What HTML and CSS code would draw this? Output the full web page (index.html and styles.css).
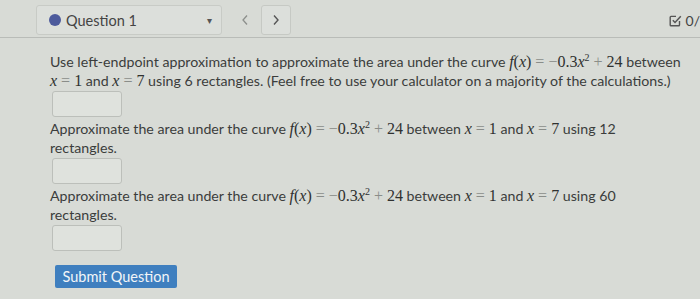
FILE: index.html
```html
<!DOCTYPE html>
<html>
<head>
<meta charset="utf-8">
<link rel="stylesheet" href="styles.css">
</head>
<body>
<div class="header">
  <div class="qselect">
    <span class="dot"></span>
    <span class="qlabel">Question 1</span>
    <span class="caret">&#9662;</span>
  </div>
  <div class="navbtn prev"><svg width="8" height="12" viewBox="0 0 8 12"><path d="M6 1.5 L2 6 L6 10.5" fill="none" stroke="#8c8f8b" stroke-width="1.3"/></svg></div>
  <div class="navbtn next"><svg width="8" height="12" viewBox="0 0 8 12"><path d="M2 1.5 L6 6 L2 10.5" fill="none" stroke="#555" stroke-width="1.4"/></svg></div>
  <div class="score">
    <svg class="chk" width="13" height="13" viewBox="0 0 13 13"><path d="M10.5 7 V11 Q10.5 11.8 9.7 11.8 H2 Q1.2 11.8 1.2 11 V3.2 Q1.2 2.4 2 2.4 H7" fill="none" stroke="#555" stroke-width="1.4"/><path d="M3.8 6.3 L6 8.5 L11.8 2.2" fill="none" stroke="#555" stroke-width="1.5"/></svg>
    <span>0/</span>
  </div>
</div>
<div class="content">
  <p class="q">Use left-endpoint approximation to approximate the area under the curve <span class="m"><i>f</i>(<i>x</i>) <span class="op">=</span> <span class="op">−</span>0.3<i>x</i><sup>2</sup> <span class="op">+</span> 24</span> between <span class="m"><i>x</i> <span class="op">=</span> 1</span> and <span class="m"><i>x</i> <span class="op">=</span> 7</span> using 6 rectangles. (Feel free to use your calculator on a majority of the calculations.)</p>
  <div class="answer"></div>
  <p class="q">Approximate the area under the curve <span class="m"><i>f</i>(<i>x</i>) <span class="op">=</span> <span class="op">−</span>0.3<i>x</i><sup>2</sup> <span class="op">+</span> 24</span> between <span class="m"><i>x</i> <span class="op">=</span> 1</span> and <span class="m"><i>x</i> <span class="op">=</span> 7</span> using 12 rectangles.</p>
  <div class="answer"></div>
  <p class="q">Approximate the area under the curve <span class="m"><i>f</i>(<i>x</i>) <span class="op">=</span> <span class="op">−</span>0.3<i>x</i><sup>2</sup> <span class="op">+</span> 24</span> between <span class="m"><i>x</i> <span class="op">=</span> 1</span> and <span class="m"><i>x</i> <span class="op">=</span> 7</span> using 60 rectangles.</p>
  <div class="answer"></div>
  <button class="submit">Submit Question</button>
</div>
</body>
</html>
```
FILE: styles.css
```css
html, body {
  margin: 0;
  padding: 0;
}
body {
  background: #d8dbd6;
  font-family: Lato, "Open Sans", sans-serif;
  color: #3b3d3c;
  width: 700px;
  height: 299px;
  overflow: hidden;
}
.header {
  height: 38px;
  border-bottom: 1px solid #b9bcb8;
  display: flex;
  align-items: flex-start;
  padding-top: 5px;
  box-sizing: border-box;
}
.qselect {
  margin-left: 36px;
  width: 186px;
  height: 30px;
  box-sizing: border-box;
  border: 1px solid #c8cbc6;
  border-radius: 3px;
  background: #dcdfdb;
  display: flex;
  align-items: center;
  padding-left: 12px;
  padding-right: 9px;
}
.dot {
  width: 12px;
  height: 12px;
  border-radius: 50%;
  background: #4d5b9c;
  margin-right: 5px;
}
.qlabel {
  font-size: 14.5px;
  color: #444;
  flex: 1;
}
.caret {
  font-size: 10px;
  color: #555;
}
.navbtn {
  width: 30px;
  height: 30px;
  box-sizing: border-box;
  display: flex;
  align-items: center;
  justify-content: center;
  border-radius: 3px;
}
.prev {
  margin-left: 8px;
}
.next {
  margin-left: 1px;
  border: 1px solid #c6c9c4;
  background: #dcdfdb;
}
.score {
  margin-left: auto;
  display: flex;
  align-items: center;
  gap: 4px;
  height: 30px;
  font-size: 14px;
  color: #444;
}
.content {
  padding: 14px 4px 0 50px;
}
.q {
  margin: 0;
  font-size: 14.2px;
  line-height: 19px;
  width: 634px;
}
.m {
  font-family: "Liberation Serif", serif;
  font-size: 16px;
  line-height: 1;
  color: #2f3130;
  white-space: nowrap;
}
.m i {
  font-style: italic;
}
.op {
  color: #8a8d89;
}
.m sup {
  font-size: 10px;
  line-height: 0;
}
.answer {
  width: 70px;
  height: 26px;
  box-sizing: border-box;
  border: 1px solid #bcbfba;
  border-radius: 3px;
  background: #dfe2dd;
  margin: 1px 0 2px 2px;
}
.submit {
  display: block;
  margin-top: 14px;
  margin-left: 5px;
  background: #3f7fbf;
  color: #f2f5f8;
  border: none;
  border-radius: 2px;
  font-family: Lato, sans-serif;
  font-size: 14.5px;
  padding: 0;
  height: 23px;
  width: 122px;
  white-space: nowrap;
}
```
